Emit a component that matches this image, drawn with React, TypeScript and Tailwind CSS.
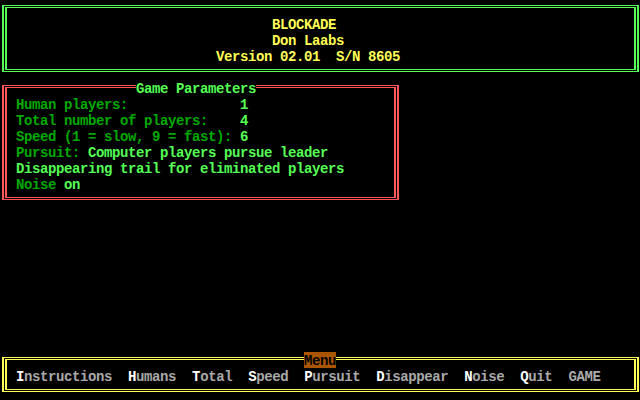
import { ReactNode } from "react";

// DOS text-mode palette
const C = {
  green: "text-[#00AA00]",
  lgreen: "text-[#55FF55]",
  yellow: "text-[#FFFF55]",
  gray: "text-[#AAAAAA]",
  white: "text-white",
};

// leading blanks so a string lands on a given text column
const pad = (n: number) => " ".repeat(n);

const MENU = [
  { label: "Instructions", hot: true },
  { label: "Humans", hot: true },
  { label: "Total", hot: true },
  { label: "Speed", hot: true },
  { label: "Pursuit", hot: true },
  { label: "Disappear", hot: true },
  { label: "Noise", hot: true },
  { label: "Quit", hot: true },
  { label: "GAME", hot: false },
];

// double-line frame: 2px verticals, 1px horizontals, 1px gap between
function DoubleBox({
  color,
  className = "",
  children,
}: {
  color: string;
  className?: string;
  children: ReactNode;
}) {
  return (
    <div className={`relative border-x-2 border-y p-[1px] ${color} ${className}`}>
      <div className={`border-x-2 border-y ${color} h-full`}>{children}</div>
    </div>
  );
}

// one 16px text row; the taller line-height drops the baseline to where the VGA font sits
function Line({ children }: { children: ReactNode }) {
  return <div className="h-[16px] leading-[19px] whitespace-pre">{children}</div>;
}

export default function App() {
  return (
    <div
      className="w-[640px] h-[400px] bg-black flex flex-col overflow-hidden font-bold text-[14px] leading-[16px] tracking-[-0.4px]"
      style={{ fontFamily: '"Liberation Mono", "DejaVu Sans Mono", monospace' }}
    >
      {/* title banner, rows 0-4 */}
      <header className="h-[80px] pt-[5px] pl-[2px] pr-[1px]">
        <DoubleBox color="border-[#55FF55]" className="h-[67px]">
          <div className={`pt-[8px] pl-[1px] ${C.yellow}`}>
            <Line>{pad(33)}BLOCKADE</Line>
            <Line>{pad(33)}Don Laabs</Line>
            <Line>{pad(26)}Version 02.01  S/N 8605</Line>
          </div>
        </DoubleBox>
      </header>

      {/* settings panel, rows 5-12 */}
      <section className="h-[128px] pt-[5px] pl-[2px]">
        <DoubleBox color="border-[#FF5555]" className="w-[397px] h-[115px]">
          <span
            className={`absolute left-[132px] top-[-6px] h-[16px] leading-[19px] bg-black whitespace-pre ${C.lgreen}`}
          >
            Game Parameters
          </span>
          <div className="pt-[8px] pl-[9px]">
            <Line>
              <span className={C.green}>Human players:{pad(14)}</span>
              <span className={C.lgreen}>1</span>
            </Line>
            <Line>
              <span className={C.green}>Total number of players:{pad(4)}</span>
              <span className={C.lgreen}>4</span>
            </Line>
            <Line>
              <span className={C.green}>Speed (1 = slow, 9 = fast): </span>
              <span className={C.lgreen}>6</span>
            </Line>
            <Line>
              <span className={C.green}>Pursuit: </span>
              <span className={C.lgreen}>Computer players pursue leader</span>
            </Line>
            <Line>
              <span className={C.lgreen}>Disappearing trail for eliminated players</span>
            </Line>
            <Line>
              <span className={C.green}>Noise </span>
              <span className={C.lgreen}>on</span>
            </Line>
          </div>
        </DoubleBox>
      </section>

      <div className="flex-1" />

      {/* command bar, rows 22-24 */}
      <footer className="h-[48px] pt-[5px] pl-[2px] pr-[1px]">
        <DoubleBox color="border-[#FFFF55]" className="h-[35px]">
          <span className="absolute left-[300px] top-[-6px] h-[16px] leading-[19px] bg-[#AA5500] text-black whitespace-pre">
            Menu
          </span>
          <div className={`pt-[8px] pl-[1px] ${C.gray}`}>
            <Line>
              {" "}
              {MENU.map((m, i) => (
                <span key={m.label}>
                  {i > 0 && "  "}
                  {m.hot ? (
                    <>
                      <span className={C.white}>{m.label[0]}</span>
                      {m.label.slice(1)}
                    </>
                  ) : (
                    m.label
                  )}
                </span>
              ))}
            </Line>
          </div>
        </DoubleBox>
      </footer>
    </div>
  );
}
